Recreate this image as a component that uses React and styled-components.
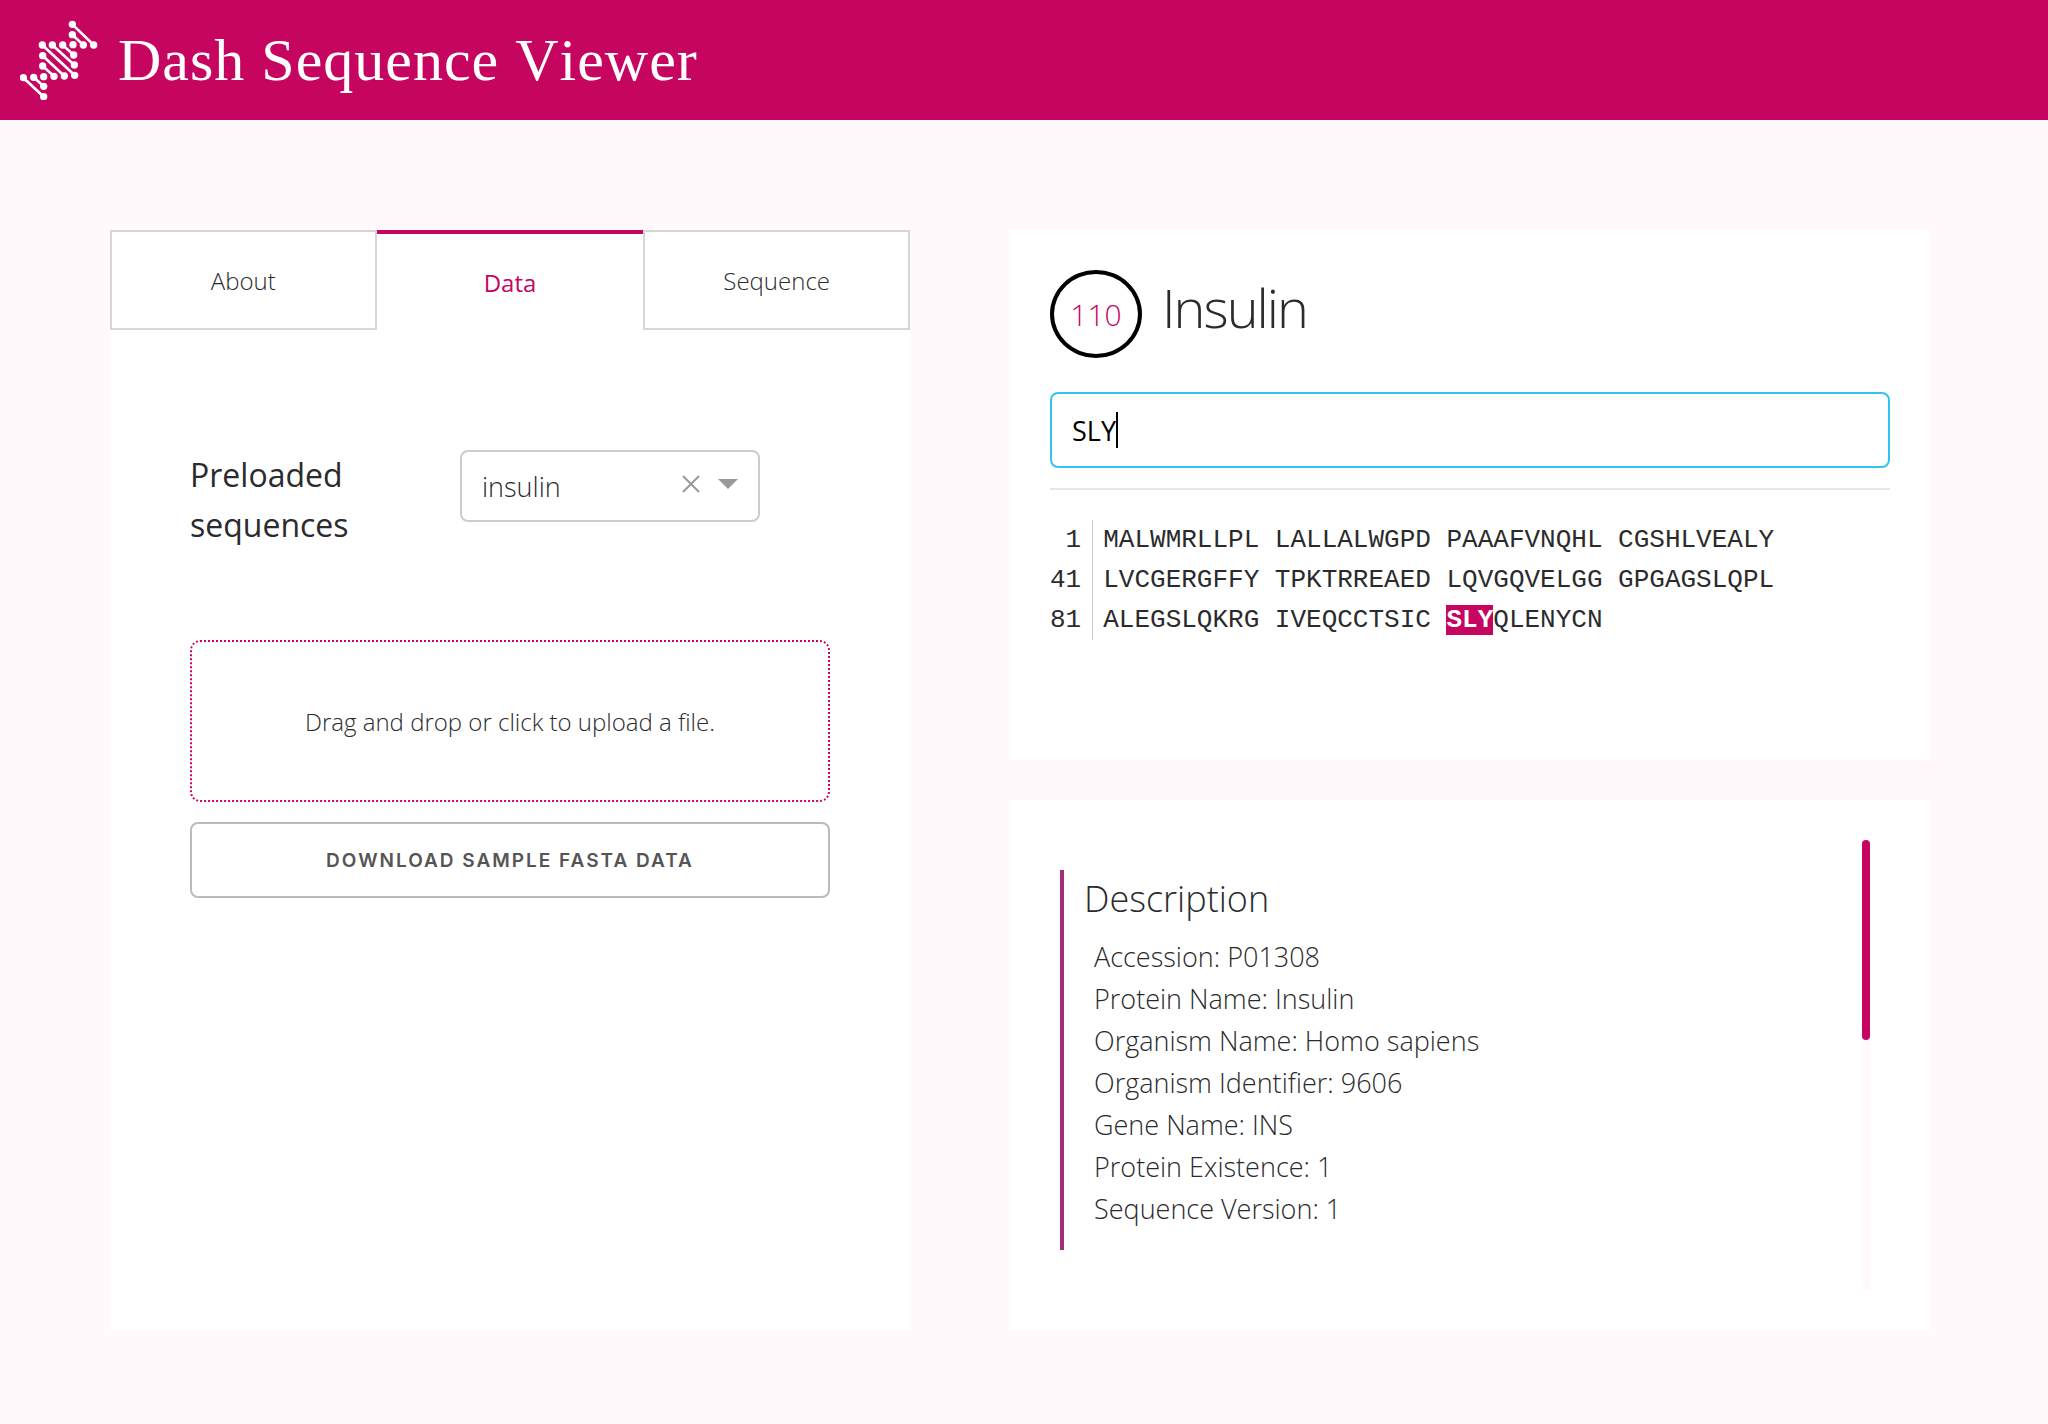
import React, { useState } from "react";
import styled, { createGlobalStyle } from "styled-components";

const PINK = "#c60561";
const BLUSH = "#fff9fb";

const SEQUENCE =
    "MALWMRLLPLLALLALWGPDPAAAFVNQHLCGSHLVEALYLVCGERGFFYTPKTRREAEDLQVGQVELGGGPGAGSLQPLALEGSLQKRGIVEQCCTSICSLYQLENYCN";
const CHARS_PER_LINE = 40;

const details = [
    "Accession: P01308",
    "Protein Name: Insulin",
    "Organism Name: Homo sapiens",
    "Organism Identifier: 9606",
    "Gene Name: INS",
    "Protein Existence: 1",
    "Sequence Version: 1",
];

const tabs = ["About", "Data", "Sequence"];

// base pair dots and the strands between them
const dots = [
    [70, 233], [101, 232], [131, 230], [162, 229], [193, 228], [224, 226],
    [131, 259], [131, 290],
    [127, 135], [157, 135], [188, 135], [219, 134], [250, 135], [281, 135],
    [128, 167], [128, 198], [221, 165], [223, 195],
    [217, 73], [217, 104],
];
const strands = [
    [70, 233, 131, 290], [101, 232, 131, 259],
    [127, 135, 224, 226], [128, 167, 193, 228], [128, 198, 162, 229],
    [157, 135, 223, 195], [188, 135, 221, 165],
    [217, 73, 281, 135], [217, 104, 250, 135],
];

function App() {
    const [activeTab, setActiveTab] = useState("Data");
    const [query, setQuery] = useState("SLY");

    return (
        <>
            <GlobalStyle />
            <Header>
                <Logo />
                <Title>Dash Sequence Viewer</Title>
            </Header>
            <Main>
                <ControlPanel>
                    <TabBar role="tablist">
                        {tabs.map((tab) => (
                            <Tab
                                key={tab}
                                role="tab"
                                aria-selected={tab === activeTab}
                                $active={tab === activeTab}
                                onClick={() => setActiveTab(tab)}
                            >
                                {tab}
                            </Tab>
                        ))}
                    </TabBar>
                    <DataTab />
                </ControlPanel>
                <Results>
                    <SequenceCard query={query} setQuery={setQuery} />
                    <DescriptionCard />
                </Results>
            </Main>
        </>
    );
}

function Logo() {
    return (
        <LogoSvg viewBox="60 60 234 240" aria-hidden="true">
            {strands.map(([x1, y1, x2, y2]) => (
                <line key={`${x1}-${y1}`} x1={x1} y1={y1} x2={x2} y2={y2} />
            ))}
            {dots.map(([cx, cy]) => (
                <circle key={`${cx}-${cy}`} cx={cx} cy={cy} r="11" />
            ))}
        </LogoSvg>
    );
}

function DataTab() {
    return (
        <TabContent>
            <FieldRow>
                <FieldLabel htmlFor="preloaded">Preloaded sequences</FieldLabel>
                <Dropdown>
                    <Select id="preloaded" defaultValue="insulin">
                        <option value="insulin">insulin</option>
                    </Select>
                    <DropdownIcons>
                        <ClearButton aria-label="Clear value">
                            <svg width="18" height="18" viewBox="0 0 18 18">
                                <path d="M1 1 17 17M17 1 1 17" stroke="#999" strokeWidth="2" />
                            </svg>
                        </ClearButton>
                        <svg width="20" height="10" viewBox="0 0 20 10" aria-hidden="true">
                            <path d="M0 0H20L10 10Z" fill="#999" />
                        </svg>
                    </DropdownIcons>
                </Dropdown>
            </FieldRow>
            <UploadArea>
                Drag and drop or click to upload a file.
                <FileInput type="file" />
            </UploadArea>
            <DownloadButton>Download sample FASTA data</DownloadButton>
        </TabContent>
    );
}

function SequenceCard({ query, setQuery }) {
    const matchStart = query ? SEQUENCE.indexOf(query.toUpperCase()) : -1;
    const matchEnd = matchStart + query.length;
    const lines = [];
    for (let i = 0; i < SEQUENCE.length; i += CHARS_PER_LINE) {
        lines.push(i);
    }

    // split a line into plain and matched pieces, with a space after every 10 residues
    const renderLine = (start) => {
        const end = Math.min(start + CHARS_PER_LINE, SEQUENCE.length);
        const pieces = [];
        for (let i = start; i < end; i++) {
            const hit = matchStart >= 0 && i >= matchStart && i < matchEnd;
            let last = pieces[pieces.length - 1];
            if (last && i % 10 === 0) last.text += " ";
            if (!last || last.hit !== hit) {
                last = { hit, text: "" };
                pieces.push(last);
            }
            last.text += SEQUENCE[i];
        }
        return pieces.map((p, n) => (p.hit ? <Match key={n}>{p.text}</Match> : <span key={n}>{p.text}</span>));
    };

    return (
        <Card>
            <CardHeading>
                <Badge>{SEQUENCE.length}</Badge>
                <Protein>Insulin</Protein>
            </CardHeading>
            <SearchBox>
                <SearchInput
                    aria-label="Search sequence"
                    value={query}
                    onChange={(e) => setQuery(e.target.value)}
                />
                <Caret />
            </SearchBox>
            <Divider />
            <SequenceGrid>
                <LineNumbers>
                    {lines.map((start) => (
                        <div key={start}>{start + 1}</div>
                    ))}
                </LineNumbers>
                <Residues>
                    {lines.map((start) => (
                        <div key={start}>{renderLine(start)}</div>
                    ))}
                </Residues>
            </SequenceGrid>
        </Card>
    );
}

function DescriptionCard() {
    const [scrollTop, setScrollTop] = useState(0);

    return (
        <Card>
            <ScrollFrame>
                <ScrollArea tabIndex={0} onScroll={(e) => setScrollTop(e.currentTarget.scrollTop)}>
                    <Description>
                        <h2>Description</h2>
                        <ul>
                            {details.map((item) => (
                                <li key={item}>{item}</li>
                            ))}
                        </ul>
                    </Description>
                </ScrollArea>
                <ScrollTrack>
                    <ScrollThumb style={{ marginTop: scrollTop * 0.44 }} />
                </ScrollTrack>
            </ScrollFrame>
        </Card>
    );
}

const GlobalStyle = createGlobalStyle`
    * {
        box-sizing: border-box;
    }

    body {
        margin: 0;
        background: ${BLUSH};
        color: #2a2b2d;
        font-family: "Open Sans", "Noto Sans", sans-serif;
        font-weight: 300;
    }

    button, input, select {
        font: inherit;
        color: inherit;
    }
`;

const Header = styled.header`
    display: flex;
    align-items: center;
    gap: 20px;
    height: 120px;
    padding: 0 20px;
    background: ${PINK};
    color: #fff;
`;

const LogoSvg = styled.svg`
    width: 78px;
    height: 80px;
    fill: #fff;
    stroke: #fff;

    line {
        stroke-width: 8;
    }

    circle {
        stroke: none;
    }
`;

const Title = styled.h1`
    margin: 0;
    font-family: "Liberation Serif", "Times New Roman", serif;
    font-size: 60px;
    font-weight: 400;
    font-kerning: none;
    line-height: 80px;
    letter-spacing: 1px;
`;

const Main = styled.main`
    display: grid;
    grid-template-columns: 20fr 23fr;
    gap: 100px;
    padding: 110px 118px 94px 110px;
`;

const ControlPanel = styled.section`
    background: #fff;
`;

const TabBar = styled.div`
    display: grid;
    grid-template-columns: repeat(3, 1fr);
    height: 100px;
`;

const Tab = styled.button`
    padding: 0;
    border: 2px solid #d6d6d6;
    background: #fff;
    font-size: 24px;
    ${({ $active }) => $active && `
        border-width: 4px 0 0;
        border-color: ${PINK};
        color: ${PINK};
        font-weight: 400;
    `}
`;

const TabContent = styled.div`
    display: flex;
    flex-direction: column;
    gap: 20px;
    padding: 120px 80px;
`;

const FieldRow = styled.div`
    display: flex;
    height: 170px;
`;

const FieldLabel = styled.label`
    width: 270px;
    padding-right: 70px;
    font-size: 32px;
    font-weight: 400;
    line-height: 50px;
`;

const Dropdown = styled.div`
    display: flex;
    align-items: center;
    width: 300px;
    height: 72px;
    padding: 0 20px;
    border: 2px solid #ccc;
    border-radius: 8px;
`;

const Select = styled.select`
    flex: 1;
    min-width: 0;
    appearance: none;
    padding: 0;
    border: 0;
    background: none;
    font-size: 27px;
    outline: none;
`;

const DropdownIcons = styled.div`
    display: flex;
    align-items: center;
    gap: 18px;
    padding-bottom: 4px;
`;

const ClearButton = styled.button`
    display: flex;
    padding: 0;
    border: 0;
    background: none;
`;

const UploadArea = styled.label`
    position: relative;
    display: flex;
    align-items: center;
    justify-content: center;
    height: 162px;
    border: 2px dotted ${PINK};
    border-radius: 10px;
    font-size: 24px;
`;

const FileInput = styled.input`
    position: absolute;
    inset: 0;
    opacity: 0;
`;

const DownloadButton = styled.button`
    height: 76px;
    border: 2px solid #bbb;
    border-radius: 8px;
    background: #fff;
    color: #555;
    font-family: Inter, sans-serif;
    font-size: 19px;
    font-weight: 600;
    letter-spacing: 2px;
    text-transform: uppercase;
`;

const Results = styled.div`
    display: grid;
    grid-auto-rows: 530px;
    gap: 40px;
`;

const Card = styled.section`
    padding: 40px;
    background: #fff;
`;

const CardHeading = styled.div`
    display: flex;
    gap: 20px;
    height: 122px;
`;

const Badge = styled.div`
    display: flex;
    align-items: center;
    justify-content: center;
    width: 92px;
    height: 88px;
    border: 4px solid #000;
    border-radius: 50%;
    color: ${PINK};
    font-size: 30px;
`;

const Protein = styled.h2`
    margin: 0;
    font-size: 54px;
    font-weight: 300;
    line-height: 74px;
    letter-spacing: -2px;
`;

const SearchBox = styled.div`
    display: flex;
    align-items: center;
    height: 76px;
    padding: 0 20px;
    border: 2px solid #33c3f0;
    border-radius: 8px;
`;

const SearchInput = styled.input`
    field-sizing: content;
    padding: 0;
    border: 0;
    outline: none;
    background: none;
    caret-color: transparent;
    color: #000;
    font-size: 27px;
    font-weight: 400;
`;

const Caret = styled.span`
    width: 2px;
    height: 36px;
    background: #000;
`;

const Divider = styled.hr`
    height: 2px;
    margin: 20px 0 30px;
    border: 0;
    background: #e5e9ed;
`;

const SequenceGrid = styled.div`
    display: flex;
    font-family: "Courier New", "Liberation Mono", monospace;
    font-size: 26px;
    font-weight: 400;
    line-height: 40px;
`;

const LineNumbers = styled.div`
    padding-right: 11px;
    border-right: 1px solid #ccc;
    text-align: right;
`;

const Residues = styled.div`
    padding-left: 10px;
    white-space: pre;
`;

const Match = styled.mark`
    background: ${PINK};
    color: #fff;
    font-weight: 700;
`;

const ScrollFrame = styled.div`
    display: flex;
    height: 450px;
    margin-right: 20px;
`;

const ScrollArea = styled.div`
    flex: 1;
    padding: 30px 10px;
    overflow-y: scroll;
    scrollbar-width: none;
    outline: none;

    &::after {
        content: "";
        display: block;
        height: 572px;
    }
`;

const ScrollTrack = styled.div`
    width: 8px;
    background: ${BLUSH};
`;

const ScrollThumb = styled.div`
    height: 200px;
    border-radius: 4px;
    background: ${PINK};
`;

const Description = styled.div`
    height: 380px;
    padding: 4px 20px;
    border-left: 4px solid #a12d7c;

    h2 {
        margin: 0;
        font-size: 36px;
        font-weight: 300;
        line-height: 50px;
    }

    ul {
        margin: 0;
        padding: 12px 10px;
        list-style: none;
        font-size: 27px;
        line-height: 42px;
    }
`;

export default App;
